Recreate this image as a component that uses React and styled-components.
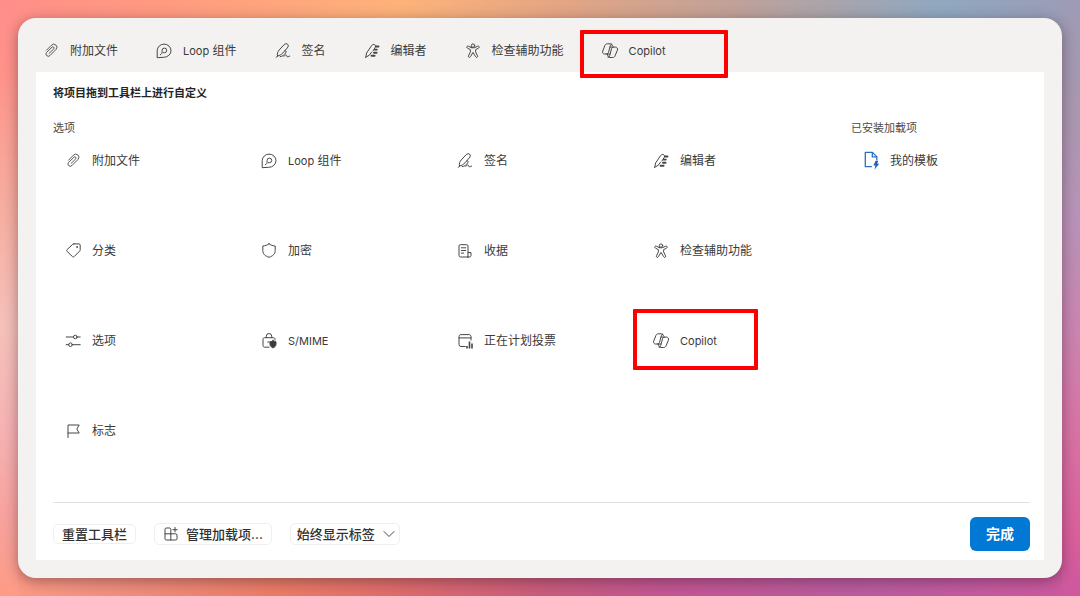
import React from "react";
import styled, { createGlobalStyle, css } from "styled-components";

const GlobalStyle = createGlobalStyle`
  *, *::before, *::after { box-sizing: border-box; }
  body {
    margin: 0;
    color: #3b3a39;
    font-family: Inter, "Noto Sans CJK SC", sans-serif;
    font-size: 12px;
  }
  button, select { font: inherit; color: inherit; }
`;

const Backdrop = styled.div`
  min-height: 100vh;
  padding: 18px;
  background:
    linear-gradient(180deg, #ff8e8a 0%, #ff938a 12%, #f7ab9d 32%, #f5c1ba 55%, #f6b2b3 72%, #f8a3a0 86%, #fd9b85 100%) left / 18px 100% no-repeat,
    linear-gradient(180deg, #9d9bb5 0%, #a998b0 18%, #b793b8 36%, #c985b0 55%, #d873a4 72%, #d95f9b 90%, #cd589e 100%) right / 18px 100% no-repeat,
    linear-gradient(90deg, #ff8e8a 0%, #ff9a80 15%, #fdb279 37%, #e3a584 52%, #c0a198 68%, #8fa8c0 87%, #9d9bb5 100%) top / 100% 50% no-repeat,
    linear-gradient(90deg, #fd9b85 0%, #f0907f 10%, #ea7b66 26%, #dd6c6c 37%, #c95c7c 50%, #c25694 62%, #b95c9e 80%, #cd589e 100%) bottom / 100% 50% no-repeat;
`;

const Card = styled.main`
  display: flex;
  flex-direction: column;
  min-height: calc(100vh - 36px);
  padding: 0 18px 18px;
  border-radius: 18px;
  background: #f3f2f0;
  box-shadow: 0 3px 14px rgba(40, 20, 30, 0.42);
`;

const Toolbar = styled.div`
  display: flex;
  align-items: center;
  gap: 38px;
  height: 54px;
  padding: 12px 7px 0;
`;

const Panel = styled.section`
  flex: 1;
  padding: 12px 14px 9px 17px;
  background: #fff;
`;

const Title = styled.h1`
  margin: 0 0 17px;
  font-size: 11px;
  line-height: 18px;
  font-weight: 700;
  color: #242424;
`;

const Sections = styled.div`
  display: grid;
  grid-template-columns: minmax(0, 1fr) 179px;
`;

const SectionTitle = styled.h2`
  margin: 0 0 12px;
  font-size: 11px;
  line-height: 18px;
  font-weight: 400;
  color: #4a4948;
`;

const ItemGrid = styled.div`
  display: grid;
  grid-template-columns: repeat(${(p) => p.$columns}, minmax(0, 1fr));
  grid-auto-rows: 24px;
  row-gap: 66px;
  justify-items: start;
  padding: 0 2px 0 12px;
`;

const ItemButton = styled.button`
  position: relative;
  display: flex;
  align-items: center;
  gap: 11px;
  height: 24px;
  padding: 0;
  border: 0;
  background: none;
  line-height: 24px;
  white-space: nowrap;
`;

const Latin = styled.span`
  font-size: 11px;
`;

const Highlight = styled.span`
  position: absolute;
  border: 4px solid #fe0000;
  border-radius: 1px;
  pointer-events: none;
  ${(p) =>
    p.$place === "toolbar"
      ? css`inset: -9px -62px -15px -22px;`
      : css`inset: -20px -41px -17px -20px;`}
`;

const Glyph = styled.svg`
  flex: none;
  width: 16px;
  height: 16px;
  overflow: visible;
  fill: none;
  stroke: #484644;
  stroke-width: 1;
  stroke-linecap: round;
  stroke-linejoin: round;
`;

const Footer = styled.footer`
  display: flex;
  align-items: center;
  gap: 18px;
  margin-top: 59px;
  padding-top: 14px;
  border-top: 1px solid #e3e2e1;
`;

const outline = css`
  border: 1px solid #f0efee;
  border-radius: 5px;
  background: #fff;
  font-size: 13px;
  font-weight: 500;
  color: #323130;
`;

const FooterButton = styled.button`
  ${outline}
  display: flex;
  align-items: center;
  gap: 7px;
  height: ${(p) => (p.$short ? 20 : 22)}px;
  padding: 0 8px;
  line-height: 18px;
  white-space: nowrap;
`;

const SelectBox = styled.span`
  display: grid;
  align-items: center;

  > * { grid-area: 1 / 1; }
  > svg {
    justify-self: end;
    margin-right: 3px;
    pointer-events: none;
  }
`;

const Select = styled.select`
  ${outline}
  appearance: none;
  width: 110px;
  height: 22px;
  padding: 0 22px 0 6px;
  line-height: 20px;
`;

const DoneButton = styled.button`
  width: 60px;
  height: 34px;
  margin-left: auto;
  padding: 0;
  border: 0;
  border-radius: 6px;
  background: #0078d4;
  font-size: 14px;
  font-weight: 700;
  line-height: 32px;
  color: #fff;
`;

const drawings = {
  attach: (
    <path
      d="M3.500 7.200 8.500 2.200a3 3 0 0 1 4.600 4.100L7 12.500a2.300 2.300 0 0 1-3.400-3.100L9 4.200a1.200 1.200 0 0 1 1.800 1.600L6.200 10.300"
      strokeWidth="0.9"
    />
  ),
  loop: (
    <>
      <path d="M1.200 14.300V7.700a6.900 6.600 0 1 1 6.900 6.600Z" />
      <path d="M4.300 11.800c1.300-.6 1.800-1.500 1.800-3V7.300A2.300 2.300 0 1 1 8.400 9.700H7.300" />
    </>
  ),
  signature: (
    <>
      <path d="M2.500 13C2 10.500 2.700 8.700 4.200 7L8.900 1.900c1.200-1.300 2.900-1.500 3.800-.6.900.9.700 2.300-.4 3.600L7.900 9.900c-1.500 1.700-3.300 2.600-5.400 3.100Z" />
      <path d="m1.300 14.400 1.200-1.400M10 7.700c1.400 0 1.400 1.200.6 2.300-1.300 1.900-3.100 3.500-5.400 3.700M8.900 13.300c1.400-1.800 2.600-1.800 2.700-.4.100 1.100 1.500 1.200 3.100.2" />
    </>
  ),
  editor: (
    <>
      <path d="M1.700 14.300 2.600 10 7.600 2.600C8.400 1.400 9.800 1.100 10.800 1.800c.9.700 1 1.800.3 2.900L9 7.900M1.700 14.300 5.300 12.200 7.500 9.200" />
      <path
        d="M12 3.500h2.500M10.800 6.600h2M10 9.700h2.600M7.600 12.700h3"
        strokeWidth="1.900"
      />
    </>
  ),
  person: (
    <>
      <circle cx="8" cy="2.600" r="1.700" />
      <path d="M6.200 4.500 3.300 3.200c-1.400-.6-2.200 1.200-.9 1.900l3 1.600v2.200L3.500 12.800c-.6 1.500 1.200 2.300 1.900.9L8 9.400l2.600 4.300c.7 1.400 2.500.6 1.900-.9l-1.900-3.900V6.700l3-1.600c1.300-.7.500-2.500-.9-1.900L9.800 4.500c-1.200.5-2.400.5-3.600 0Z" />
    </>
  ),
  copilot: (
    <>
      <path d="M10.500 3 9.900 1.800A1.800 1.800 0 0 0 8.300.8H5.300c-1.200 0-2 .6-2.400 1.700L.7 8.100c-.5 1.600.3 2.900 1.900 2.900h1.800c1.100 0 1.800-.6 2.100-1.600l1.900-6.800C8.700 1.500 9.100 1 9.800 1.100" />
      <path d="M5.300 11 6 13.100A1.800 1.800 0 0 0 7.700 14.500h3c1.200 0 2-.6 2.400-1.800l2.300-5.500c.5-1.700-.3-3.100-1.900-3.100h-1.900c-1.100 0-1.800.6-2.100 1.700l-1.800 6.800c-.3 1.200-.8 1.900-1.700 1.700M8 4.100h3.600M4.400 11h3.400" />
    </>
  ),
  tag: (
    <>
      <path d="M8.900.9h5.100c.7 0 1.200.5 1.200 1.200v4.700c0 .5-.2.900-.5 1.200l-5.400 5.500c-.6.600-1.300.6-1.900 0L2.100 8.400c-.6-.6-.6-1.200 0-1.800l5.500-5.200c.4-.4.800-.5 1.300-.5Z" />
      <circle cx="12" cy="4" r=".4" fill="#484644" />
    </>
  ),
  shield: (
    <path d="M8 .8c1.700 1.300 3.700 2 6.200 2.200v4.600c0 3.300-2.200 5.400-6.200 6.700-4-1.300-6.200-3.400-6.200-6.700V3C4.300 2.800 6.300 2.100 8 .8Z" />
  ),
  receipt: (
    <path d="M11 14H3.700A1.700 1.700 0 0 1 2 12.300V3c0-.8.500-1.300 1.300-1.300h6.400c.8 0 1.300.5 1.300 1.300v11Zm0 0h1.300c1 0 1.700-.7 1.700-1.700V9.600h-3M4.300 4.800h4.400M4.300 7.500h4.400M4.300 10.100h2.400" />
  ),
  sliders: (
    <>
      <path d="M1.200 4h7.300M12.200 4H15.200M1.200 11.700h2.500M7.400 11.700h7.800" />
      <circle cx="10.300" cy="4" r="1.800" />
      <circle cx="5.500" cy="11.700" r="1.800" />
    </>
  ),
  lock: (
    <>
      <path d="M8 14.200H3.700c-1 0-1.700-.7-1.700-1.700V6.300c0-1 .7-1.600 1.700-1.600h8.600c1 0 1.700.6 1.700 1.600v.8M5.300 4.700V3.200a2.700 2.700 0 0 1 5.400 0v1.500M6.800 9h1.700" />
      <path d="M12 7.600c.8.700 1.700 1.100 3 1.200v2.300c0 1.700-1 3-3 3.800-2-.8-3-2.100-3-3.800V8.800c1.300-.1 2.200-.5 3-1.200Z" fill="#3b3a39" />
    </>
  ),
  poll: (
    <>
      <path d="M8.200 13.500H4a2 2 0 0 1-2-2V3.600c0-1.100.9-2 2-2h8c1.100 0 2 .9 2 2V7M2 4.900h12" />
      <path d="M10 15.400v-2.500M12.500 15.400V8.500M15 15.400v-4.900" strokeWidth="1.600" strokeLinecap="butt" />
    </>
  ),
  flag: <path d="M3 14.500V2H14.200l-2.400 4 2.400 4H3" />,
  template: (
    <>
      <path d="M8.500 13.600H2.300V-.6H9.500L13.800 3.600v3.200" stroke="#2b6fbf" strokeWidth="1.300" />
      <path d="M9.300-.4v4.300h4.400" stroke="#2b6fbf" strokeWidth="1.300" />
      <path d="M12.600 7.800h2.700l-1.100 3h2l-4.900 6 1.200-4.200h-2.100Z" fill="#1b62b5" stroke="none" />
    </>
  ),
  addins: (
    <path d="M7.800 7.800V3.200c0-.7-.5-1.200-1.200-1.200H3.200C2.500 2 2 2.500 2 3.200v9.600c0 .7.5 1.200 1.200 1.200h9.600c.7 0 1.200-.5 1.200-1.200V9c0-.7-.5-1.200-1.200-1.200H2M7.800 7.800V14M12 1.500v4.400M9.800 3.700h4.400" />
  ),
  chevron: <path d="m3 5.500 5 5 5-5" />,
};

function Icon({ name }) {
  return (
    <Glyph viewBox="0 0 16 16" aria-hidden="true">
      {drawings[name]}
    </Glyph>
  );
}

function Item({ icon, latin, label, highlight }) {
  return (
    <ItemButton type="button">
      <Icon name={icon} />
      <span>
        {latin && <Latin>{latin}</Latin>}
        {latin && label ? " " : ""}
        {label}
      </span>
      {highlight && <Highlight $place={highlight} />}
    </ItemButton>
  );
}

const attach = { icon: "attach", label: "附加文件" };
const loop = { icon: "loop", latin: "Loop", label: "组件" };
const signature = { icon: "signature", label: "签名" };
const editor = { icon: "editor", label: "编辑者" };
const accessibility = { icon: "person", label: "检查辅助功能" };
const copilot = { icon: "copilot", latin: "Copilot" };

const toolbarItems = [
  attach,
  loop,
  signature,
  editor,
  accessibility,
  { ...copilot, highlight: "toolbar" },
];

const optionItems = [
  attach,
  loop,
  signature,
  editor,
  { icon: "tag", label: "分类" },
  { icon: "shield", label: "加密" },
  { icon: "receipt", label: "收据" },
  accessibility,
  { icon: "sliders", label: "选项" },
  { icon: "lock", latin: "S/MIME" },
  { icon: "poll", label: "正在计划投票" },
  { ...copilot, highlight: "grid" },
  { icon: "flag", label: "标志" },
];

export default function App() {
  return (
    <>
      <GlobalStyle />
      <Backdrop>
        <Card>
          <Toolbar role="toolbar">
            {toolbarItems.map((item) => (
              <Item key={item.icon} {...item} />
            ))}
          </Toolbar>
          <Panel>
            <Title>将项目拖到工具栏上进行自定义</Title>
            <Sections>
              <section>
                <SectionTitle>选项</SectionTitle>
                <ItemGrid $columns={4}>
                  {optionItems.map((item) => (
                    <Item key={item.icon} {...item} />
                  ))}
                </ItemGrid>
              </section>
              <section>
                <SectionTitle>已安装加载项</SectionTitle>
                <ItemGrid $columns={1}>
                  <Item icon="template" label="我的模板" />
                </ItemGrid>
              </section>
            </Sections>
            <Footer>
              <FooterButton type="button" $short>
                重置工具栏
              </FooterButton>
              <FooterButton type="button">
                <Icon name="addins" />
                管理加载项...
              </FooterButton>
              <SelectBox>
                <Select aria-label="标签显示方式" defaultValue="always">
                  <option value="always">始终显示标签</option>
                </Select>
                <Icon name="chevron" />
              </SelectBox>
              <DoneButton type="button">完成</DoneButton>
            </Footer>
          </Panel>
        </Card>
      </Backdrop>
    </>
  );
}
